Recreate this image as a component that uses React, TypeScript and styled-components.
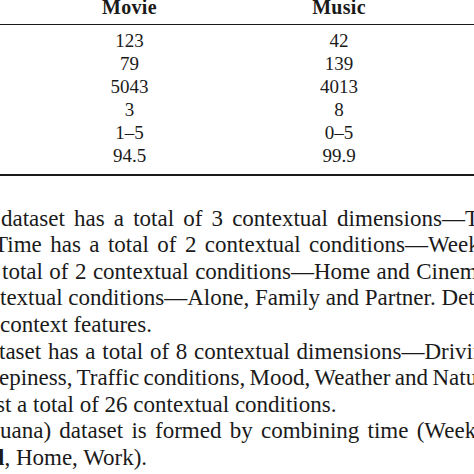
import styled, { createGlobalStyle } from 'styled-components';

const GlobalStyle = createGlobalStyle`
  html, body {
    margin: 0;
    padding: 0;
    background: #ffffff;
  }
  body {
    width: 474px;
    height: 474px;
    overflow: hidden;
  }
`;

// 표 데이터
const rows: [string, string][] = [
  ['123', '42'],
  ['79', '139'],
  ['5043', '4013'],
  ['3', '8'],
  ['1–5', '0–5'],
  ['94.5', '99.9']
];

// 본문 줄 (잘린 원본 그대로) - spread 는 양쪽 정렬로 벌어진 단어 간격
const lines: { text: string; offset: number; spread: number; bold?: string }[] = [
  { text: 'dataset has a total of 3 contextual dimensions—Time, Location and Social.', offset: 1, spread: 3.4 },
  { text: 'Time has a total of 2 contextual conditions—Weekday and Weekend.', offset: -6, spread: 2.7 },
  { text: 'total of 2 contextual conditions—Home and Cinema. Social', offset: 2, spread: 0.7 },
  { text: 'textual conditions—Alone, Family and Partner. Details', offset: 0, spread: 0 },
  { text: 'context features.', offset: 0, spread: 0 },
  { text: 'taset has a total of 8 contextual dimensions—Driving style', offset: -1, spread: 1 },
  { text: 'epiness, Traffic conditions, Mood, Weather and Nature', offset: -1, spread: -1.3 },
  { text: 'st a total of 26 contextual conditions.', offset: -4, spread: 0 },
  { text: 'uana) dataset is formed by combining time (Weekday, Weekend)', offset: 0, spread: 2.5 },
  { text: ', Home, Work).', offset: -2, spread: 0, bold: 'l' }
];

export default function App() {
  return (
    <Page>
      <GlobalStyle />
      <Table>
        <HeadRow>
          <HeadCell>Movie</HeadCell>
          <HeadCell>Music</HeadCell>
        </HeadRow>
        <Body>
          {rows.map(([movie, music], i) => (
            <Row key={i}>
              <Cell>{movie}</Cell>
              <Cell>{music}</Cell>
            </Row>
          ))}
        </Body>
      </Table>

      <Notes>
        {lines.map((line, i) => (
          <Line key={i} $offset={line.offset} $spread={line.spread}>
            {line.bold && <b>{line.bold}</b>}
            {line.text}
          </Line>
        ))}
      </Notes>
    </Page>
  );
}

const Page = styled.div`
  width: 474px;
  height: 474px;
  overflow: hidden;
  background: #ffffff;
  color: #1a1a1a;
  font-family: 'Liberation Serif', 'DejaVu Serif', serif;
`;

const Table = styled.div`
  display: flex;
  flex-direction: column;
  border-bottom: 2px solid #1a1a1a;
`;

const HeadRow = styled.div`
  display: grid;
  grid-template-columns: 259px 160px;
  margin-top: -5px;
  padding-bottom: 5px;
  border-bottom: 1px solid #1a1a1a;
`;

const HeadCell = styled.div`
  text-align: center;
  font-size: 20px;
  line-height: 24px;
  font-weight: 700;
  letter-spacing: 0.3px;
`;

const Body = styled.div`
  display: flex;
  flex-direction: column;
  padding: 4px 0 7px;
`;

const Row = styled.div`
  display: grid;
  grid-template-columns: 259px 160px;
`;

const Cell = styled.div`
  text-align: center;
  font-size: 19px;
  line-height: 23px;
`;

const Notes = styled.div`
  display: flex;
  flex-direction: column;
  margin-top: 29.6px;
`;

const Line = styled.div<{ $offset: number; $spread: number }>`
  margin-left: ${(p) => p.$offset}px;
  word-spacing: ${(p) => p.$spread}px;
  font-size: 23px;
  line-height: 26.6px;
  white-space: nowrap;

  b {
    font-weight: 700;
  }
`;
